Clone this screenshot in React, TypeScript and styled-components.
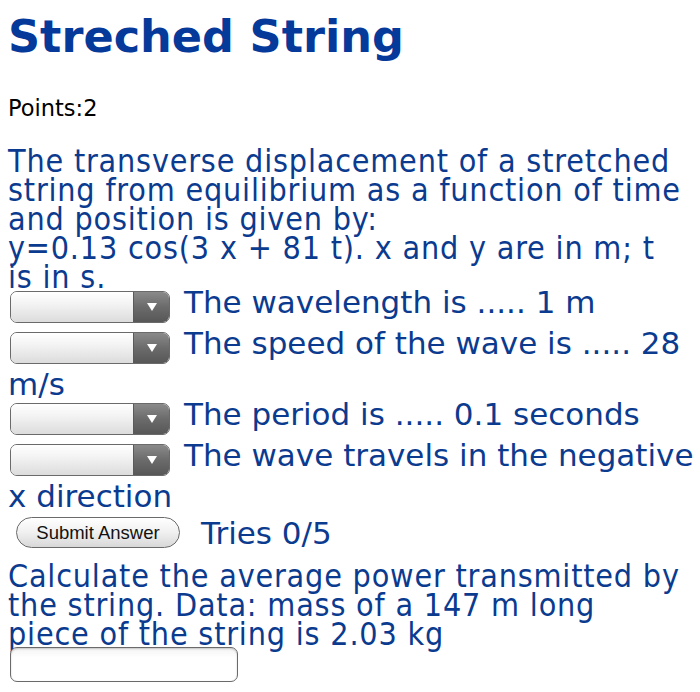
import React from "react";
import styled, { createGlobalStyle } from "styled-components";

const Global = createGlobalStyle`
  html, body { margin: 0; padding: 0; background: #fff; }
  body { padding: 0 8px; font-family: "DejaVu Sans", Verdana, sans-serif; }
`;

const Page = styled.div`
  display: flex;
  flex-direction: column;
  width: 684px;
`;

const Title = styled.h1`
  margin: 9px 0 0 0;
  font-family: "DejaVu Sans", Verdana, sans-serif;
  font-weight: bold;
  font-size: 44.6px;
  line-height: 56px;
  color: #05399a;
`;

const Points = styled.div`
  margin-top: 30px;
  font-size: 22.5px;
  line-height: 26px;
  color: #000;
`;

const Question = styled.div<{ $top: number }>`
  margin-top: ${(p) => p.$top}px;
  width: 676px;
  font-family: "DejaVu Sans Condensed", "DejaVu Sans", sans-serif;
  font-stretch: condensed;
  font-size: 32px;
  letter-spacing: 0.8px;
  line-height: 29px;
  color: #0b3b8f;
`;

const Options = styled.div`
  margin-top: -5px;
  margin-right: -8px;
  display: flex;
  flex-direction: column;
`;

const Option = styled.div`
  font-size: 31px;
  line-height: 30px;
  color: #0b3b8f;
`;

const SelectBox = styled.span`
  display: inline-flex;
  vertical-align: -9px;
  width: 160px;
  height: 32px;
  box-sizing: border-box;
  margin: 0 14px 5px 2px;
  border: 1px solid #6a6a6a;
  border-radius: 7px;
  overflow: hidden;
  box-shadow: inset 0 1px 1px rgba(255, 255, 255, 0.8);
`;

const SelectField = styled.span`
  flex: 1;
  background: linear-gradient(#ffffff, #f3f3f3 40%, #dcdcdc);
`;

const SelectArrow = styled.span`
  width: 35px;
  display: flex;
  align-items: center;
  justify-content: center;
  background: linear-gradient(#8a8a8a, #6b6b6b 50%, #575757);
  border-left: 1px solid #5a5a5a;
`;

const SubmitRow = styled.div`
  margin-top: 6px;
  display: flex;
  align-items: center;
  gap: 21px;
`;

const SubmitButton = styled.button`
  margin-left: 8px;
  width: 164px;
  height: 31px;
  border: 1px solid #6a6a6a;
  border-radius: 16px;
  background: linear-gradient(#ffffff, #f0f0f0 50%, #d8d8d8);
  font-family: "Liberation Sans", Arial, sans-serif;
  font-size: 18.5px;
  color: #111;
  padding: 0;
`;

const Tries = styled.span`
  font-size: 31px;
  line-height: 24px;
  color: #0b3b8f;
`;

const AnswerInput = styled.div`
  margin: -2px 0 0 2px;
  width: 228px;
  height: 35px;
  box-sizing: border-box;
  border: 1px solid #6a6a6a;
  border-radius: 7px;
  background: linear-gradient(#f4f4f4, #ffffff 30%);
  box-shadow: inset 0 1px 2px rgba(0, 0, 0, 0.2);
`;

const Select = () => (
  <SelectBox>
    <SelectField />
    <SelectArrow>
      <svg width="12" height="10" viewBox="0 0 12 10">
        <path d="M1 1 H11 L6 9 Z" fill="#fff" />
      </svg>
    </SelectArrow>
  </SelectBox>
);

const options = [
  "The wavelength is ..... 1 m",
  "The speed of the wave is ..... 28 m/s",
  "The period is ..... 0.1 seconds",
  "The wave travels in the negative x direction",
];

export default function App() {
  return (
    <Page>
      <Global />
      <Title>Streched String</Title>
      <Points>Points:2</Points>
      <Question $top={26}>
        The transverse displacement of a stretched string from equilibrium as a
        function of time and position is given by:
        <br />
        y=0.13 cos(3 x + 81 t). x and y are in m; t is in s.
      </Question>
      <Options>
        {options.map((o) => (
          <Option key={o}>
            <Select />
            {o}
          </Option>
        ))}
      </Options>
      <SubmitRow>
        <SubmitButton>Submit Answer</SubmitButton>
        <Tries>Tries 0/5</Tries>
      </SubmitRow>
      <Question $top={14}>
        Calculate the average power transmitted by the string. Data: mass of a
        147 m long piece of the string is 2.03 kg
      </Question>
      <AnswerInput />
    </Page>
  );
}
